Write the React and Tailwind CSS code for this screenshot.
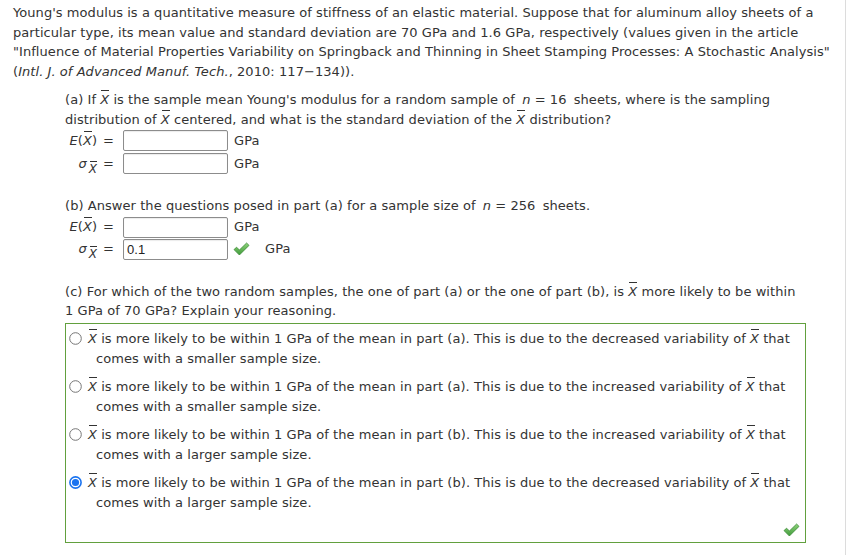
import React from "react";

function XBar({ className = "" }) {
  return (
    <span className={"relative inline-block italic " + className}>
      X
      <span className="absolute left-[1px] right-0 top-0 h-px bg-[#333]" />
    </span>
  );
}

function Sigma() {
  return (
    <span className="whitespace-nowrap">
      <span className="italic">σ</span>
      <span className="relative inline-block italic text-[12px] leading-[14px] top-[5px] ml-[2px]">
        X
        <span className="absolute left-[1px] right-0 top-[-1px] h-px bg-[#333]" />
      </span>
    </span>
  );
}

function EX() {
  return (
    <span className="whitespace-nowrap">
      <span className="italic">E</span>(<XBar />)
    </span>
  );
}

function Check() {
  return (
    <svg width="17" height="14" viewBox="0 0 17 14">
      <defs>
        <linearGradient id="cg" x1="0" y1="0" x2="0" y2="1">
          <stop offset="0" stopColor="#8fd47a" />
          <stop offset="1" stopColor="#3f9a3a" />
        </linearGradient>
      </defs>
      <path
        d="M1 7.6 L3.6 5.2 L6.4 8 L13.6 1 L16 3.4 L6.4 13 Z"
        fill="url(#cg)"
        stroke="#3a8a36"
        strokeWidth="0.8"
        strokeLinejoin="round"
      />
    </svg>
  );
}

function Row({ label, value = "", check = false }) {
  return (
    <div className="flex items-center h-[21px]">
      <div className="w-[49px] flex justify-end items-baseline whitespace-nowrap">
        {label}
        <span className="ml-[6px]">=</span>
      </div>
      <input
        readOnly
        value={value}
        className="ml-[9px] w-[105px] h-[21px] border border-[#8c8c8c] rounded-[2px] bg-white px-[3px] text-[13px] text-[#222] shadow-[inset_0_1px_1px_rgba(0,0,0,0.08)]"
        style={{ fontFamily: '"Liberation Sans", Arial, sans-serif' }}
      />
      {check ? (
        <>
          <span className="ml-[5px] flex items-center">
            <Check />
          </span>
          <span className="ml-[15px]">GPa</span>
        </>
      ) : (
        <span className="ml-[6px]">GPa</span>
      )}
    </div>
  );
}

function Radio({ checked }) {
  return checked ? (
    <svg width="13" height="13" viewBox="0 0 13 13" className="inline-block align-[-2px] mr-[6px]">
      <circle cx="6.5" cy="6.5" r="5.6" fill="#fff" stroke="#1a73f0" strokeWidth="1.6" />
      <circle cx="6.5" cy="6.5" r="3.6" fill="#1a73f0" />
    </svg>
  ) : (
    <svg width="13" height="13" viewBox="0 0 13 13" className="inline-block align-[-2px] mr-[6px]">
      <circle cx="6.5" cy="6.5" r="5.8" fill="#fff" stroke="#767676" strokeWidth="1" />
    </svg>
  );
}

function Option({ part, kind, size, checked }) {
  return (
    <div className="pl-[30px] [text-indent:-27px] leading-[20px] mb-[8px] whitespace-nowrap">
      <Radio checked={checked} />
      <XBar className="[text-indent:0]" /> is more likely to be within 1 GPa of the mean in part ({part}). This is due to the {kind} variability of <XBar className="[text-indent:0]" /> that
      <br />
      comes with a {size} sample size.
    </div>
  );
}

export default function App() {
  return (
    <div
      className="w-[846px] h-[555px] border-r border-[#dcdcdc] bg-white text-[#333] text-[13px] leading-[19.5px] tracking-[0.06px] pt-[3px] overflow-hidden"
      style={{ fontFamily: '"DejaVu Sans", Verdana, sans-serif' }}
    >
      <div className="pl-[13px] whitespace-nowrap">
        Young's modulus is a quantitative measure of stiffness of an elastic material. Suppose that for aluminum alloy sheets of a
        <br />
        particular type, its mean value and standard deviation are 70 GPa and 1.6 GPa, respectively (values given in the article
        <br />
        "Influence of Material Properties Variability on Springback and Thinning in Sheet Stamping Processes: A Stochastic Analysis"
        <br />
        (<span className="italic">Intl. J. of Advanced Manuf. Tech.</span>, 2010: 117−134)).
      </div>

      <div className="pl-[65px]">
        <div className="mt-[9px] whitespace-nowrap">
          (a) If <XBar /> is the sample mean Young's modulus for a random sample of{" "}
          <span className="mx-[3px]">
            <span className="italic">n</span> = 16
          </span>{" "}
          sheets, where is the sampling
          <br />
          distribution of <XBar /> centered, and what is the standard deviation of the <XBar /> distribution?
        </div>
        <div className="mt-[1px] flex flex-col gap-[2px]">
          <Row label={<EX />} />
          <Row label={<Sigma />} />
        </div>

        <div className="mt-[22px] whitespace-nowrap">
          (b) Answer the questions posed in part (a) for a sample size of{" "}
          <span className="mx-[3px]">
            <span className="italic">n</span> = 256
          </span>{" "}
          sheets.
        </div>
        <div className="mt-[1px] flex flex-col gap-[1px]">
          <Row label={<EX />} />
          <Row label={<Sigma />} value="0.1" check />
        </div>

        <div className="mt-[22px] whitespace-nowrap">
          (c) For which of the two random samples, the one of part (a) or the one of part (b), is <XBar /> more likely to be within
          <br />
          1 GPa of 70 GPa? Explain your reasoning.
        </div>
        <div className="mt-[2px] w-[741px] h-[220px] border border-[#62a03e] flex flex-col pt-[5px]">
          <Option part="a" kind="decreased" size="smaller" />
          <Option part="a" kind="increased" size="smaller" />
          <Option part="b" kind="increased" size="larger" />
          <Option part="b" kind="decreased" size="larger" checked />
          <div className="mt-auto flex justify-end pr-[5px] pb-[5px]">
            <Check />
          </div>
        </div>
      </div>
    </div>
  );
}
